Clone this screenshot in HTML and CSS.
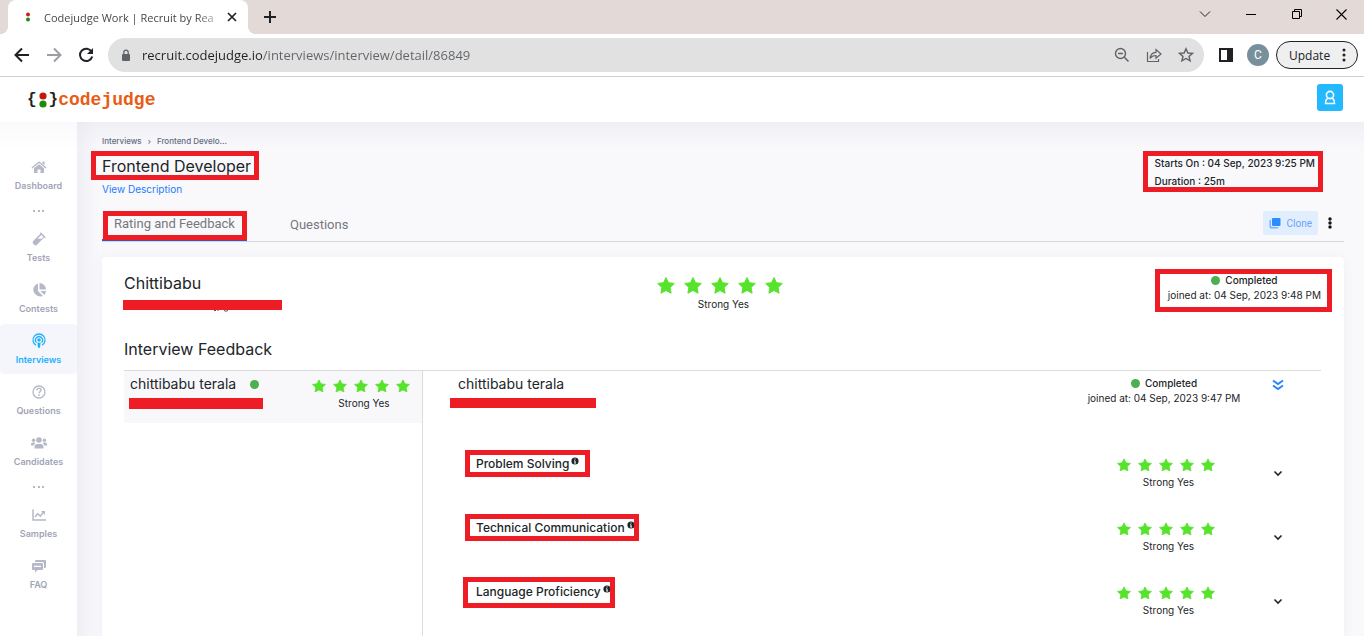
FILE: index.html
```html
<!DOCTYPE html>
<html lang="en">
<head>
<meta charset="utf-8">
<title>Codejudge Work | Recruit by Real Work</title>
<link rel="stylesheet" href="styles.css">
</head>
<body>
<svg class="defs" aria-hidden="true">
  <symbol id="star" viewBox="0 0 18 17"><path d="M9 .6 11.5 5.7 17.3 6.5 13.1 10.500 14.100 16.200 9 13.500 3.900 16.200 4.900 10.500 .7 6.500 6.500 5.700z" fill="currentColor" stroke="currentColor" stroke-linejoin="round"/></symbol>
  <symbol id="stars-l" viewBox="0 0 126 17"><use href="#star" width="18" height="17"/><use href="#star" x="27" width="18" height="17"/><use href="#star" x="54" width="18" height="17"/><use href="#star" x="81" width="18" height="17"/><use href="#star" x="108" width="18" height="17"/></symbol>
  <symbol id="info" viewBox="0 0 8 8"><circle cx="4" cy="4" r="3.600" fill="#212529"/><path d="M4 1.500v1M3.300 3.700H4v2.100M3.200 6h1.800" stroke="#fff" stroke-width="1" fill="none"/></symbol>
  <symbol id="chev" viewBox="0 0 10 7"><path d="M1.500 1.500 5 5l3.500-3.500" fill="none" stroke="#212529" stroke-width="1.600"/></symbol>
</svg>

<div class="tabstrip">
  <div class="browser-tab">
    <svg class="favicon" viewBox="0 0 6 10"><circle cx="3" cy="2.500" r="2" fill="#c8201a"/><circle cx="3" cy="7.500" r="2" fill="#1d8a12"/></svg>
    <span class="tab-title">Codejudge Work | Recruit by Rea</span>
    <button class="plain" aria-label="Close tab"><svg width="10" height="10" viewBox="0 0 10 10"><path d="M1 1l8 8M9 1 1 9" stroke="#202124" stroke-width="1.700"/></svg></button>
  </div>
  <button class="plain new-tab" aria-label="New tab"><svg width="12" height="12" viewBox="0 0 12 12"><path d="M6 0v12M0 6h12" stroke="#202124" stroke-width="2"/></svg></button>
  <div class="window-controls">
    <button class="plain" aria-label="Search tabs"><svg width="12" height="8" viewBox="0 0 12 8"><path d="M1 1.500l5 5 5-5" fill="none" stroke="#222"/></svg></button>
    <button class="plain" aria-label="Minimize"><svg width="10" height="10" viewBox="0 0 10 10"><path d="M0 5.500h10" stroke="#000"/></svg></button>
    <button class="plain" aria-label="Restore"><svg width="10" height="10" viewBox="0 0 10 10"><path d="M.5 2.500h7v7h-7zM2.500 2.500v-2h7v7h-2" fill="none" stroke="#000"/></svg></button>
    <button class="plain" aria-label="Close"><svg width="11" height="11" viewBox="0 0 11 11"><path d="M.5.5l10 10M10.500.5l-10 10" stroke="#000" stroke-width="1.100"/></svg></button>
  </div>
</div>

<div class="toolbar">
  <button class="plain" aria-label="Back"><svg width="16" height="16" viewBox="0 0 16 16"><path d="M15 8H2M8 1.500 1.500 8 8 14.500" fill="none" stroke="#202124" stroke-width="2"/></svg></button>
  <button class="plain" aria-label="Forward"><svg width="16" height="16" viewBox="0 0 16 16"><path d="M1 8h13M8 1.500 14.500 8 8 14.500" fill="none" stroke="#9b9da0" stroke-width="2"/></svg></button>
  <button class="plain" aria-label="Reload"><svg width="16" height="16" viewBox="0 0 16 16"><path d="M13.600 4.800A6.200 6.200 0 1 0 14.200 9.500" fill="none" stroke="#202124" stroke-width="2"/><path d="M15 1v6H9z" fill="#202124"/></svg></button>
  <div class="omnibox">
    <svg width="10" height="13" viewBox="0 0 10 13"><rect x="1" y="5" width="8" height="7" rx="1" fill="#5f6368"/><path d="M2.800 5V3.300a2.200 2.200 0 0 1 4.400 0V5" fill="none" stroke="#5f6368" stroke-width="1.300"/></svg>
    <input class="address" aria-label="Address" value="recruit.codejudge.io/interviews/interview/detail/86849">
    <button class="plain" aria-label="Zoom"><svg width="16" height="16" viewBox="0 0 16 16"><circle cx="6.500" cy="6.500" r="5" fill="none" stroke="#5f6368" stroke-width="1.400"/><path d="M4 6.500h5M10.300 10.300l4.200 4.200" stroke="#5f6368" stroke-width="1.500"/></svg></button>
    <button class="plain" aria-label="Share"><svg width="16" height="16" viewBox="0 0 16 16"><path d="M1.500 5v9.500h11V12M4 11.500c.5-4 2.500-6 6-6.200V2.500l5 4.500-5 4.300V8.500c-2.800 0-4.500.8-6 3z" fill="none" stroke="#5f6368" stroke-width="1.200"/></svg></button>
    <button class="plain" aria-label="Bookmark"><svg width="16" height="16" viewBox="0 0 16 16"><path d="M8 1.800l1.900 4.200 4.600.4-3.500 3 1.100 4.500L8 11.500l-4.100 2.400L5 9.400l-3.500-3L6.100 6z" fill="none" stroke="#5f6368" stroke-width="1.400"/></svg></button>
  </div>
  <button class="plain" aria-label="Side panel"><svg width="14" height="14" viewBox="0 0 14 14"><path d="M1 1h12v12H1zM9 1h4v12H9z" fill="none" stroke="#202124" stroke-width="2"/><path d="M9 1h4v12H9z" fill="#202124"/></svg></button>
  <button class="profile" aria-label="Profile">C</button>
  <button class="update">Update <svg width="4" height="14" viewBox="0 0 4 14" fill="#202124"><circle cx="2" cy="2" r="1.500"/><circle cx="2" cy="7" r="1.500"/><circle cx="2" cy="12" r="1.500"/></svg></button>
</div>

<header class="site-header">
  <a class="logo" href="#"><span class="brace">{</span><svg width="10" height="16" viewBox="0 0 10 16"><circle cx="5" cy="4" r="3.600" fill="#c4160f"/><circle cx="5" cy="12" r="3.600" fill="#1c8c0a"/></svg><span class="brace">}</span><span class="word">codejudge</span></a>
  <button class="account" aria-label="Account"><svg width="12" height="16" viewBox="0 0 12 16"><circle cx="6" cy="5" r="3.600" fill="none" stroke="#fff" stroke-width="1.600"/><path d="M3.800 7.800C2.300 9 1.500 11 1.500 13.500h9c0-2.500-.8-4.500-2.300-5.700" fill="none" stroke="#fff" stroke-width="1.600"/></svg></button>
</header>

<div class="app">
  <nav class="sidebar">
    <a class="nav-item" href="#"><svg viewBox="0 0 16 16"><path d="M8 2.200l7.500 6.300-.9 1L8 4l-6.600 5.500-.9-1z"/><path d="M3 9.300 8 5.200l5 4.100V14H9.500v-3.500h-3V14H3zM11.500 2.500h2v3.800l-2-1.700z"/></svg>Dashboard</a>
    <span class="nav-dots"><svg width="12" height="2" viewBox="0 0 12 2"><path d="M0 0h2v2H0zM5 0h2v2H5zM9 0h2v2H9z" fill="#b5b8c6"/></svg></span>
    <a class="nav-item" href="#"><svg viewBox="0 0 16 16"><path d="M9.800 1.300l5 5-.9.900-.7-.6-7 7a2.200 2.200 0 0 1-3.200 0l-.6-.6a2.200 2.200 0 0 1 0-3.200l7-7-.5-.6zm.6 2.600L6.500 7.800h4.300l1.600-1.700z" fill-rule="evenodd"/></svg>Tests</a>
    <a class="nav-item" href="#"><svg viewBox="0 0 16 16"><path d="M7 1.500V9l5 5A7 6.500 0 1 1 7 1.500z"/><path d="M8.500 1a6.500 6.500 0 0 1 6.500 6.500H8.500zM9.500 9H15a6.500 6.500 0 0 1-1.800 3.900z"/></svg>Contests</a>
    <a class="nav-item active" href="#"><svg viewBox="0 0 16 16"><path d="M5 12.200a6 6 0 1 1 6 0M5.500 9.600a3.500 3.500 0 1 1 5 0" fill="none" stroke="currentColor" stroke-width="1.300"/><circle cx="8" cy="7" r="1.800"/><path d="M6.300 9.800h3.400l-.7 5H7z"/></svg>Interviews</a>
    <a class="nav-item" href="#"><svg viewBox="0 0 16 16"><circle cx="8" cy="8" r="6" fill="none" stroke="currentColor" stroke-width="1.300"/><path d="M5.900 6.300c.1-1.300 1-1.900 2.100-1.900s2.100.7 2.100 1.700c0 1.400-2 1.500-2 3.100" fill="none" stroke="currentColor" stroke-width="1.400"/><circle cx="8" cy="11.100" r=".9"/></svg>Questions</a>
    <a class="nav-item" href="#"><svg viewBox="0 0 16 16"><circle cx="8" cy="5" r="2.800"/><circle cx="2.600" cy="5.200" r="1.700"/><circle cx="13.400" cy="5.200" r="1.700"/><path d="M3.500 13.500v-1.600a3 3 0 0 1 3-3h3a3 3 0 0 1 3 3v1.600zM0 10.500V9.300a1.800 1.800 0 0 1 1.800-1.800h1.400l1 .7-1.700 2.300zM16 10.500V9.300a1.800 1.800 0 0 0-1.800-1.800h-1.400l-1 .7 1.700 2.300z"/></svg>Candidates</a>
    <span class="nav-dots"><svg width="12" height="2" viewBox="0 0 12 2"><path d="M0 0h2v2H0zM5 0h2v2H5zM9 0h2v2H9z" fill="#b5b8c6"/></svg></span>
    <a class="nav-item" href="#"><svg viewBox="0 0 16 16"><path d="M2 2.500V13h13M4 10l2.700-3.200 2.600 2.300 3-3.800" fill="none" stroke="currentColor" stroke-width="1.500"/><path d="M10 4h4v4z"/></svg>Samples</a>
    <a class="nav-item" href="#"><svg viewBox="0 0 16 16"><path d="M5 2h9a1 1 0 0 1 1 1v6a1 1 0 0 1-1 1h-1V5.500a1.500 1.500 0 0 0-1.500-1.500H4V3a1 1 0 0 1 1-1z"/><path d="M1 6a1 1 0 0 1 1-1h9a1 1 0 0 1 1 1v5a1 1 0 0 1-1 1H6.500L4 14.500V12H2a1 1 0 0 1-1-1zm2 1.800v1.200h7V7.800z" fill-rule="evenodd"/></svg>FAQ</a>
  </nav>

  <main class="content">
    <div class="page-head">
      <div>
        <div class="breadcrumb"><a href="#">Interviews</a><span>›</span><span>Frontend Develo...</span></div>
        <h1 class="title mark mark-title">Frontend Developer</h1>
        <a class="desc-link" href="#">View Description</a>
      </div>
      <div class="meta mark mark-meta">Starts On : 04 Sep, 2023 9:25 PM<br>Duration : 25m</div>
    </div>

    <div class="tabs">
      <button class="tab selected mark mark-tab">Rating and Feedback</button>
      <button class="tab">Questions</button>
      <div class="actions">
        <button class="clone"><svg width="12" height="12" viewBox="0 0 12 12"><path d="M2 2.500A1.500 1.500 0 0 0 .5 4v6A1.500 1.500 0 0 0 2 11.500h6A1.500 1.500 0 0 0 9.500 10H3.500A1.500 1.500 0 0 1 2 8.500z" fill="#7ab3ff"/><rect x="3" y="1" width="8.500" height="8" rx="1" fill="#2d8cff"/></svg>Clone</button>
        <button class="plain" aria-label="More actions"><svg width="4" height="12" viewBox="0 0 4 12" fill="#111"><circle cx="2" cy="2" r="1.700"/><circle cx="2" cy="6" r="1.700"/><circle cx="2" cy="10" r="1.700"/></svg></button>
      </div>
    </div>

    <section class="card">
      <div class="candidate">
        <div>
          <h2 class="heading">Chittibabu</h2>
          <div class="redacted redacted-a"></div>
          <svg class="descender" width="16" height="2" viewBox="0 0 16 2"><path d="M0 .5h2M4 0v1M10 .5q2 1.500 4 0" fill="none" stroke="#555"/></svg>
        </div>
        <div class="rating rating-large"><svg role="img" aria-label="5 of 5 stars"><use href="#stars-l"/></svg><span>Strong Yes</span></div>
        <div class="status-cell"><div class="status mark mark-status"><strong><i class="dot"></i>Completed</strong>joined at: 04 Sep, 2023 9:48 PM</div></div>
      </div>

      <h2 class="heading feedback-heading">Interview Feedback</h2>

      <div class="feedback">
        <aside class="people">
          <div class="person">
            <div>
              <div class="name">chittibabu terala <i class="dot"></i></div>
              <div class="redacted redacted-b"></div>
            </div>
            <div class="rating"><svg role="img" aria-label="5 of 5 stars"><use href="#stars-l"/></svg><span>Strong Yes</span></div>
          </div>
        </aside>
        <div class="details">
          <div class="row summary">
            <div>
              <div class="name">chittibabu terala</div>
              <div class="redacted redacted-c"></div>
            </div>
            <div class="status"><strong><i class="dot"></i>Completed</strong>joined at: 04 Sep, 2023 9:47 PM</div>
            <button class="plain" aria-label="Expand all"><svg width="12" height="12" viewBox="0 0 12 12"><path d="M1 1.500l5 3.500 5-3.500M1 6.500 6 10l5-3.500" fill="none" stroke="#2485ff" stroke-width="2"/></svg></button>
          </div>
          <div class="row skill">
            <div><span class="skill-name mark mark-problem">Problem Solving<svg class="info"><use href="#info"/></svg></span></div>
            <div class="rating"><svg role="img" aria-label="5 of 5 stars"><use href="#stars-l"/></svg><span>Strong Yes</span></div>
            <button class="plain" aria-label="Expand"><svg width="10" height="7"><use href="#chev"/></svg></button>
          </div>
          <div class="row skill">
            <div><span class="skill-name mark mark-technical">Technical Communication<svg class="info"><use href="#info"/></svg></span></div>
            <div class="rating"><svg role="img" aria-label="5 of 5 stars"><use href="#stars-l"/></svg><span>Strong Yes</span></div>
            <button class="plain" aria-label="Expand"><svg width="10" height="7"><use href="#chev"/></svg></button>
          </div>
          <div class="row skill">
            <div><span class="skill-name mark mark-language">Language Proficiency<svg class="info"><use href="#info"/></svg></span></div>
            <div class="rating"><svg role="img" aria-label="5 of 5 stars"><use href="#stars-l"/></svg><span>Strong Yes</span></div>
            <button class="plain" aria-label="Expand"><svg width="10" height="7"><use href="#chev"/></svg></button>
          </div>
        </div>
      </div>
    </section>
  </main>
</div>
</body>
</html>
```
FILE: styles.css
```css
* { box-sizing: border-box; }
body {
  margin: 0;
  min-height: 100vh;
  display: flex;
  flex-direction: column;
  background: #fff;
  color: #212529;
  font-family: Inter, "Open Sans", sans-serif;
  font-size: 10px;
}
button { font-family: inherit; cursor: pointer; }
a { color: inherit; text-decoration: none; }
h1, h2 { margin: 0; font-weight: 400; }
svg { flex: none; }
.defs { position: absolute; width: 0; height: 0; }
.plain {
  display: flex;
  align-items: center;
  justify-content: center;
  padding: 0;
  border: 0;
  background: none;
}

/* Browser window */
.tabstrip {
  flex: none;
  display: flex;
  height: 34px;
  padding-left: 8px;
  background: #e3dad7;
  font-family: "Open Sans", sans-serif;
}
.browser-tab {
  position: relative;
  display: flex;
  align-items: center;
  width: 240px;
  padding: 0 11px 0 17px;
  border-radius: 8px 8px 0 0;
  background: #fff;
}
.browser-tab::before,
.browser-tab::after {
  content: "";
  position: absolute;
  bottom: 0;
  width: 8px;
  height: 8px;
}
.browser-tab::before { left: -8px; background: radial-gradient(circle at 0 0, transparent 8px, #fff 8px); }
.browser-tab::after { right: -8px; background: radial-gradient(circle at 100% 0, transparent 8px, #fff 8px); }
.favicon { width: 6px; height: 10px; }
.tab-title {
  flex: 1;
  margin: 0 4px 0 13px;
  white-space: nowrap;
  font-size: 11px;
  color: transparent;
  background: linear-gradient(90deg, #3c4043 85%, #e4e4e4);
  -webkit-background-clip: text;
  background-clip: text;
}
.new-tab { width: 28px; margin-left: 8px; }
.window-controls { display: flex; margin-left: auto; padding: 0 1px 6px 0; }
.window-controls .plain { width: 46px; }
.window-controls .plain:last-child { width: 43px; }
.toolbar {
  flex: none;
  display: flex;
  align-items: center;
  height: 43px;
  padding: 0 6px 0 14px;
  border-bottom: 1px solid #cfcfcf;
  font-family: "Open Sans", sans-serif;
}
.toolbar > .plain { width: 16px; margin-right: 16px; }
.omnibox {
  flex: 1;
  display: flex;
  align-items: center;
  gap: 16px;
  height: 34px;
  margin: 0 14px 0 -2px;
  padding: 0 10px 0 13px;
  border-radius: 17px;
  background: #e1e1e1;
}
.address {
  flex: 1;
  margin-left: -5px;
  padding: 0;
  border: 0;
  outline: 0;
  font: 13px "Open Sans", sans-serif;
  color: transparent;
  background: linear-gradient(90deg, #202124 120px, #5f6368 120px);
  -webkit-background-clip: text;
  background-clip: text;
}
.toolbar > .profile {
  width: 22px;
  height: 22px;
  margin: 0 7px 0 -3px;
  padding: 0;
  border: 0;
  border-radius: 50%;
  background: #78909c;
  color: #fff;
  font: 12px Roboto, sans-serif;
}
.update {
  display: flex;
  align-items: center;
  justify-content: space-between;
  width: 82px;
  height: 28px;
  padding: 0 11px 0 12px;
  border: 1px solid #202124;
  border-radius: 14px;
  background: #efefef;
  color: #202124;
  font-size: 12px;
}

/* Site header */
.site-header {
  flex: none;
  display: flex;
  align-items: center;
  justify-content: space-between;
  height: 45px;
  padding: 0 21px 4px 27px;
}
.logo { display: flex; align-items: center; padding-top: 4px; font-family: "Liberation Mono", monospace; font-weight: 700; }
.logo svg { margin: 0 1px; }
.brace { font-size: 16px; color: #222; }
.word { font-size: 18px; color: #ea5b13; }
.account {
  display: flex;
  align-items: center;
  justify-content: center;
  width: 26px;
  height: 27px;
  padding: 0;
  border: 0;
  border-radius: 3px;
  background: #22b9ff;
}

/* Sidebar */
.app { flex: 1; display: flex; }
.sidebar {
  flex: none;
  display: flex;
  flex-direction: column;
  gap: 1px;
  width: 77px;
  padding-top: 28px;
  background: linear-gradient(#fafafc, #fff 28px);
}
.nav-item {
  flex: none;
  display: flex;
  flex-direction: column;
  align-items: center;
  gap: 4px;
  height: 50px;
  padding-top: 9px;
  color: #a1a4b8;
  font-size: 9px;
  font-weight: 600;
  line-height: 14px;
}
.nav-item svg { width: 16px; height: 16px; fill: #b5b8c6; color: #b5b8c6; }
.nav-item.active { border-radius: 4px; background: #f4f6fc; color: #22b0fc; }
.nav-item.active svg { fill: #22b0fc; color: #22b0fc; }
.nav-dots { flex: none; display: flex; align-items: center; justify-content: center; height: 20px; }

/* Page */
.content {
  flex: 1;
  display: flex;
  flex-direction: column;
  min-width: 0;
  padding: 14px 20px 0 25px;
  background:
    linear-gradient(90deg, rgba(232, 232, 240, .6), transparent 22px),
    linear-gradient(rgba(232, 232, 240, .6), transparent 26px),
    #f9f9fc;
}
.page-head { flex: none; display: flex; justify-content: space-between; height: 72px; }
.breadcrumb { display: flex; gap: 6px; margin-bottom: 5px; font-size: 8px; font-weight: 500; line-height: 10px; color: #646c80; }
.title { width: max-content; font-size: 16px; line-height: 30px; }
.desc-link { font-size: 10px; line-height: 16px; color: #1a7cff; }
.meta { align-self: flex-start; margin: 18px 29px 0 0; font-weight: 500; line-height: 18px; }
.tabs { flex: none; display: flex; height: 34px; border-bottom: 1px solid #d6d6da; }
.tab {
  padding: 0 12px;
  border: 0;
  background: none;
  color: #77777b;
  font: 400 13px Roboto, sans-serif;
  white-space: nowrap;
}
.tab.selected { min-width: 144px; margin-right: 31px; border-bottom: 2px solid #3f51b5; }
.actions { display: flex; align-items: center; gap: 10px; height: 30px; margin-left: auto; padding-right: 12px; }
.clone {
  display: flex;
  align-items: center;
  gap: 6px;
  height: 24px;
  padding: 0 6px;
  border: 0;
  border-radius: 2px;
  background: #e0eefe;
  color: #6ba3f8;
  font: 400 10px Roboto, sans-serif;
}
.card {
  flex: 1;
  display: flex;
  flex-direction: column;
  margin-top: 15px;
  padding: 0 23px 0 22px;
  border-radius: 4px 4px 0 0;
  background: #fff;
  box-shadow: 0 0 12px rgba(82, 63, 105, .05);
}
.candidate {
  display: grid;
  grid-template-columns: 1fr 126px 1fr;
  height: 77px;
  padding-top: 15px;
}
.heading { font-size: 16px; line-height: 22px; }
.feedback-heading { padding: 4px 0 10px; }
.redacted { height: 10px; background: #ee1c24; }
.redacted-a { width: 159px; margin: 6px 0 0 -1px; }
.redacted-b { width: 134px; margin-left: -1px; }
.redacted-c { width: 146px; margin: 1px 0 0 -8px; }
.descender { display: block; margin-left: 90px; }
.dot { display: inline-block; width: 9px; height: 9px; border-radius: 50%; background: #4caf50; }
.name { font-size: 14px; line-height: 26px; }
.name .dot { margin-left: 10px; }
.rating { display: flex; flex-direction: column; align-items: center; line-height: 16px; }
.rating svg { width: 98px; height: 14px; margin-bottom: 2px; color: #57e32c; }
.rating span { padding-left: 6px; }
.rating-large { margin: 0 3px 0 -3px; padding-top: 5px; }
.rating-large svg { width: 126px; height: 17px; }
.rating-large span { padding-left: 8px; }
.status-cell { display: flex; justify-content: flex-end; padding-top: 1px; }
.status { align-self: flex-start; text-align: center; line-height: 15px; white-space: nowrap; }
.status strong { display: flex; align-items: center; justify-content: center; gap: 5px; font-weight: 500; }

.feedback { flex: 1; display: flex; border-top: 1px solid #dcdcdc; }
.people { width: 299px; border-right: 1px solid #dcdcdc; }
.person { display: flex; justify-content: space-between; height: 52px; padding: 0 12px 0 6px; background: #f8f8fb; }
.person .rating { padding-top: 8px; }
.person .redacted { height: 11px; margin-top: 1px; }
.details { flex: 1; }
.row { display: grid; grid-template-columns: 1fr 160px 68px; padding-right: 9px; }
.row > .plain { height: 30px; }
.summary { height: 78px; padding-left: 35px; }
.summary .status { padding-top: 5px; }
.summary > .plain { height: 28px; }
.skill { height: 64px; padding: 9px 9px 0 53px; }
.skill .rating { padding-left: 3px; }
.skill-name { display: inline-flex; gap: 2px; font-size: 12px; font-weight: 500; line-height: 12px; }
.info { width: 8px; height: 8px; margin-top: -1px; }

/* Red callout frames laid over the content */
.mark { position: relative; }
.mark::after { content: ""; position: absolute; border: 5px solid #ee1c24; pointer-events: none; }
.mark-title::after { inset: 0 -8px 1px -11px; }
.mark-meta::after { inset: -3px -8px -2px -12px; }
.mark-tab::after { inset: 3px 0 -1px 1px; }
.mark-status::after { inset: -4px -11px -9px -13px; }
.mark-problem::after { inset: -8px -11px -7px -11px; }
.mark-technical::after { inset: -8px -4px -7px -11px; }
.mark-language::after { inset: -9px -4px -10px -13px; }
```
